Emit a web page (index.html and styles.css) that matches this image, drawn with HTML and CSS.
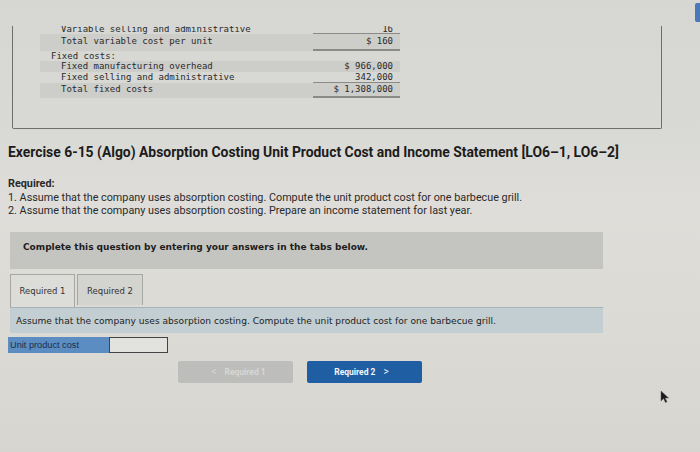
FILE: index.html
```html
<!DOCTYPE html>
<html lang="en">
<head>
<meta charset="utf-8">
<title>Exercise 6-15</title>
<link rel="stylesheet" href="styles.css">
</head>
<body>
<div class="side-tab"></div>
<div class="panel">
  <div class="costs">
    <div class="row first">
      <span class="label indent">Variable selling and administrative</span>
      <span class="value line">16</span>
    </div>
    <div class="row shade total">
      <span class="label indent">Total variable cost per unit</span>
      <span class="value thick">$ 160</span>
    </div>
    <div class="row head">
      <span class="label">Fixed costs:</span>
      <span class="value"></span>
    </div>
    <div class="row shade">
      <span class="label indent">Fixed manufacturing overhead</span>
      <span class="value">$ 966,000</span>
    </div>
    <div class="row">
      <span class="label indent">Fixed selling and administrative</span>
      <span class="value line">342,000</span>
    </div>
    <div class="row shade total2">
      <span class="label indent">Total fixed costs</span>
      <span class="value thick">$ 1,308,000</span>
    </div>
  </div>
</div>

<h1 class="title">Exercise 6-15 (Algo) Absorption Costing Unit Product Cost and Income Statement [LO6–1, LO6–2]</h1>

<div class="required">
  <p class="req-head">Required:</p>
  <p>1. Assume that the company uses absorption costing. Compute the unit product cost for one barbecue grill.</p>
  <p>2. Assume that the company uses absorption costing. Prepare an income statement for last year.</p>
</div>

<div class="notice">Complete this question by entering your answers in the tabs below.</div>

<div class="tabs">
  <div class="tab active">Required 1</div>
  <div class="tab">Required 2</div>
</div>
<div class="instruction">Assume that the company uses absorption costing. Compute the unit product cost for one barbecue grill.</div>

<div class="answer">
  <div class="answer-label">Unit product cost</div>
  <div class="answer-input"></div>
</div>

<div class="nav">
  <div class="btn disabled"><span class="chev">&lt;</span> Required 1</div>
  <div class="btn primary">Required 2 <span class="chev">&gt;</span></div>
</div>

<svg class="cursor" width="9" height="13" viewBox="0 0 9 13"><path d="M1 1 L1 11 L3.5 8.5 L5.5 12.5 L7 11.8 L5 8 L8.5 8 Z" fill="#1a1a1a" stroke="#555" stroke-width="0.5"/></svg>
</body>
</html>
```

FILE: styles.css
```css
* { box-sizing: border-box; }
html, body { margin: 0; padding: 0; }
body {
  width: 700px;
  height: 452px;
  overflow: hidden;
  position: relative;
  background: linear-gradient(180deg, #d6d6d3 0%, #d9d9d5 30%, #deddd9 45%, #dbdad5 75%, #d6d5d0 100%);
  font-family: "Roboto", "Liberation Sans", sans-serif;
  color: #1e1e1e;
}
.side-tab {
  position: absolute;
  right: 0;
  top: 3px;
  width: 5px;
  height: 19px;
  background: #4a77b8;
  border-radius: 2px 0 0 2px;
}
.panel {
  margin: 26px 0 0 12px;
  width: 650px;
  height: 103px;
  border-left: 1px solid #6e6e6c;
  border-right: 1px solid #6e6e6c;
  border-bottom: 1px solid #6e6e6c;
  border-radius: 0 0 2px 2px;
  overflow: hidden;
  padding-left: 27px;
}
.costs {
  margin-top: -2px;
  width: 360px;
  font-family: "DejaVu Sans Mono", "Liberation Mono", monospace;
  font-size: 9px;
  color: #2a2a2a;
}
.row {
  display: flex;
  height: 11px;
  line-height: 11px;
}
.row.first { height: 10px; line-height: 10px; }
.row.shade { background: #cdcdca; }
.row.total { height: 17px; line-height: 15px; }
.row.head { height: 10px; line-height: 10px; }
.row.total2 { height: 15px; line-height: 13px; }
.label {
  flex: 1;
  padding-left: 11px;
  white-space: nowrap;
}
.label.indent { padding-left: 21px; }
.value {
  width: 87px;
  text-align: right;
  padding-right: 7px;
}
.value.line { border-bottom: 1px solid #8a8a88; }
.value.thick { border-bottom: 2px solid #8a8a88; }
.title {
  margin: 15px 0 0 8px;
  font-size: 13.9px;
  font-weight: 700;
  line-height: 16px;
  color: #1c1c1c;
  white-space: nowrap;
}
.required {
  margin: 17px 0 0 8px;
  font-size: 10.8px;
  line-height: 13.5px;
  color: #2a2a2a;
}
.required p { margin: 0; }
.req-head { font-weight: 700; }
.notice {
  margin: 14px 0 0 10px;
  width: 593px;
  height: 37px;
  background: #c4c4c1;
  font-family: "DejaVu Sans", Verdana, sans-serif;
  font-weight: 700;
  font-size: 9px;
  line-height: 30px;
  padding-left: 13px;
  color: #1d1d1d;
}
.tabs {
  display: flex;
  gap: 2px;
  margin: 5px 0 0 10px;
  height: 33px;
  align-items: flex-start;
}
.tab {
  width: 66px;
  height: 31px;
  border: 1px solid #a6a6a3;
  border-bottom: none;
  background: #d3d3d0;
  font-family: "DejaVu Sans", Verdana, sans-serif;
  font-size: 8.5px;
  line-height: 33px;
  text-align: center;
  color: #333;
}
.tab.active {
  width: 65px;
  height: 33px;
  background: #dcdcd8;
}
.instruction {
  margin-left: 10px;
  width: 593px;
  height: 26px;
  background: #c3ced2;
  border-top: 1px solid #a9b3b6;
  font-family: "DejaVu Sans", Verdana, sans-serif;
  font-size: 9.1px;
  line-height: 26px;
  padding-left: 6px;
  color: #222;
}
.answer {
  display: flex;
  margin: 4px 0 0 8px;
  height: 16px;
}
.answer-label {
  width: 101px;
  background: #5b8dc2;
  font-family: "Liberation Sans", Arial, sans-serif;
  font-size: 9.2px;
  line-height: 16px;
  padding-left: 2px;
  color: #1d2d48;
}
.answer-input {
  width: 59px;
  border: 1px solid #444;
  background: #e2e2de;
}
.nav {
  display: flex;
  gap: 14px;
  margin: 8px 0 0 178px;
}
.btn {
  width: 115px;
  height: 22px;
  border-radius: 2px;
  font-family: "Roboto", "Liberation Sans", sans-serif;
  font-weight: 700;
  font-size: 8.5px;
  line-height: 22px;
  text-align: center;
}
.btn.disabled {
  background: #bdbdbb;
  color: #d7d7d4;
}
.btn.primary {
  background: #1f5ea3;
  color: #f4f6fa;
}
.chev {
  display: inline-block;
  margin: 0 6px;
  font-weight: 400;
  font-size: 10px;
}
.cursor {
  position: absolute;
  left: 660px;
  top: 390px;
}
```
